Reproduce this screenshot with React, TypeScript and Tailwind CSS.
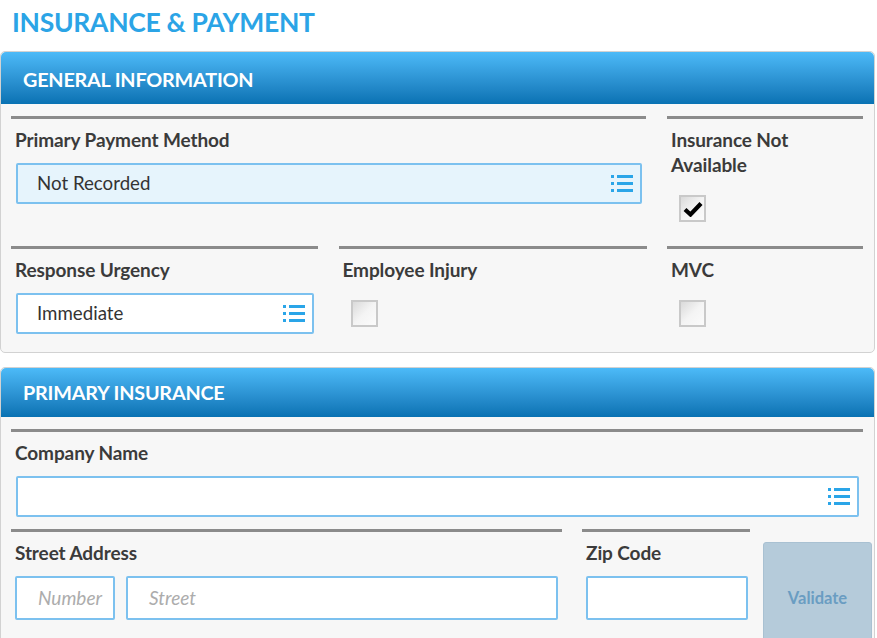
import React from 'react';

const ListIcon = () => (
  <svg width="22" height="18" viewBox="0 0 22 18" className="text-[#2aa5e8]" fill="currentColor">
    <rect x="0" y="0" width="3" height="3" />
    <rect x="6" y="0" width="16" height="3" />
    <rect x="0" y="7" width="3" height="3" />
    <rect x="6" y="7" width="16" height="3" />
    <rect x="0" y="14" width="3" height="3" />
    <rect x="6" y="14" width="16" height="3" />
  </svg>
);

const Check = ({ checked }: { checked?: boolean }) => (
  <div className="w-[27px] h-[27px] border-2 border-[#c9c9c9] bg-linear-to-br from-[#dadada] via-[#f4f4f4] to-[#fbfbfb] flex items-center justify-center">
    {checked && (
      <svg width="20" height="16" viewBox="0 0 20 16">
        <path d="M2 8.5 L7.5 13.5 L18 2.5" fill="none" stroke="#000" strokeWidth="4.2" strokeLinejoin="miter" />
      </svg>
    )}
  </div>
);

const Label = ({ children }: { children: React.ReactNode }) => (
  <div className="text-[19px] leading-[25px] font-bold text-[#3b3b3b] tracking-[-0.1px]">{children}</div>
);

const Field = ({ label, children, className = '' }: { label: React.ReactNode; children: React.ReactNode; className?: string }) => (
  <div className={`border-t-[3px] border-[#8b8b8b] pt-[8px] px-[4px] ${className}`}>
    <Label>{label}</Label>
    <div className="mt-[11px]">{children}</div>
  </div>
);

const Select = ({ value, tinted }: { value?: string; tinted?: boolean }) => (
  <div
    className={`ml-[1px] h-[41px] border-2 border-[#7cc1ef] rounded-[2px] flex items-center justify-between pl-[19px] pr-[7px] ${
      tinted ? 'bg-[#e6f4fc]' : 'bg-white'
    }`}
  >
    <span className="text-[18.7px] text-[#333]">{value}</span>
    <ListIcon />
  </div>
);

const CheckCell = ({ checked }: { checked?: boolean }) => (
  <div className="h-[41px] flex items-center pl-[8px]">
    <Check checked={checked} />
  </div>
);

const TextBox = ({ placeholder, className = '' }: { placeholder?: string; className?: string }) => (
  <div className={`h-[44px] border-2 border-[#7cc1ef] rounded-[2px] bg-white flex items-center pl-[21px] ${className}`}>
    <span className="text-[19px] italic text-[#acacac]">{placeholder}</span>
  </div>
);

const PanelHeader = ({ title, h }: { title: string; h: string }) => (
  <div className={`${h} rounded-t-[5px] bg-linear-to-b from-[#4cbaf8] to-[#0872b3] flex items-center px-[22px]`}>
    <span className="text-white font-bold text-[19.8px] tracking-[-0.2px]">{title}</span>
  </div>
);

export default function App() {
  return (
    <div className="w-[877px] h-[638px] overflow-hidden bg-white font-['Lato','Open_Sans',sans-serif]">
      <h1 className="h-[46px] flex items-center pl-[12px] text-[26.5px] font-bold text-[#2ba4e6] tracking-[-0.3px]">
        INSURANCE &amp; PAYMENT
      </h1>

      <section className="mt-[5px] w-[875px] border border-[#d2d2d2] rounded-[5px] bg-[#f7f7f7]">
        <PanelHeader title="GENERAL INFORMATION" h="h-[52px] pt-[3px]" />
        <div className="pl-[10px] pr-[11px] pt-[12px] pb-[18px]">
          <div className="grid grid-cols-[635px_196px] gap-x-[21px]">
            <Field label="Primary Payment Method">
              <Select value="Not Recorded" tinted />
            </Field>
            <Field label={<>Insurance Not<br />Available</>}>
              <CheckCell checked />
            </Field>
          </div>
          <div className="mt-[17px] grid grid-cols-[307px_308px_196px] gap-x-[20.5px]">
            <Field label="Response Urgency">
              <Select value="Immediate" />
            </Field>
            <Field label="Employee Injury">
              <CheckCell />
            </Field>
            <Field label="MVC">
              <CheckCell />
            </Field>
          </div>
        </div>
      </section>

      <section className="mt-[14px] w-[875px] border border-[#d2d2d2] rounded-[5px] bg-[#f7f7f7]">
        <PanelHeader title="PRIMARY INSURANCE" h="h-[49px] pt-[1px]" />
        <div className="pl-[10px] pr-[11px] pt-[12px] pb-[20px]">
          <Field label="Company Name">
            <Select />
          </Field>
          <div className="mt-[12px] flex items-start">
            <Field label="Street Address" className="w-[551px] shrink-0">
              <div className="flex gap-[11px]">
                <TextBox placeholder="Number" className="w-[100px]" />
                <TextBox placeholder="Street" className="flex-1" />
              </div>
            </Field>
            <Field label="Zip Code" className="ml-[20px] w-[168px] shrink-0 pr-[2px]">
              <TextBox />
            </Field>
            <button className="ml-[13px] mt-[13px] w-[109px] h-[112px] shrink-0 rounded-[3px] border border-[#a9c1d2] bg-[#b5cbda] text-[#6a9dc2] font-bold text-[16.5px]">
              Validate
            </button>
          </div>
        </div>
      </section>
    </div>
  );
}
